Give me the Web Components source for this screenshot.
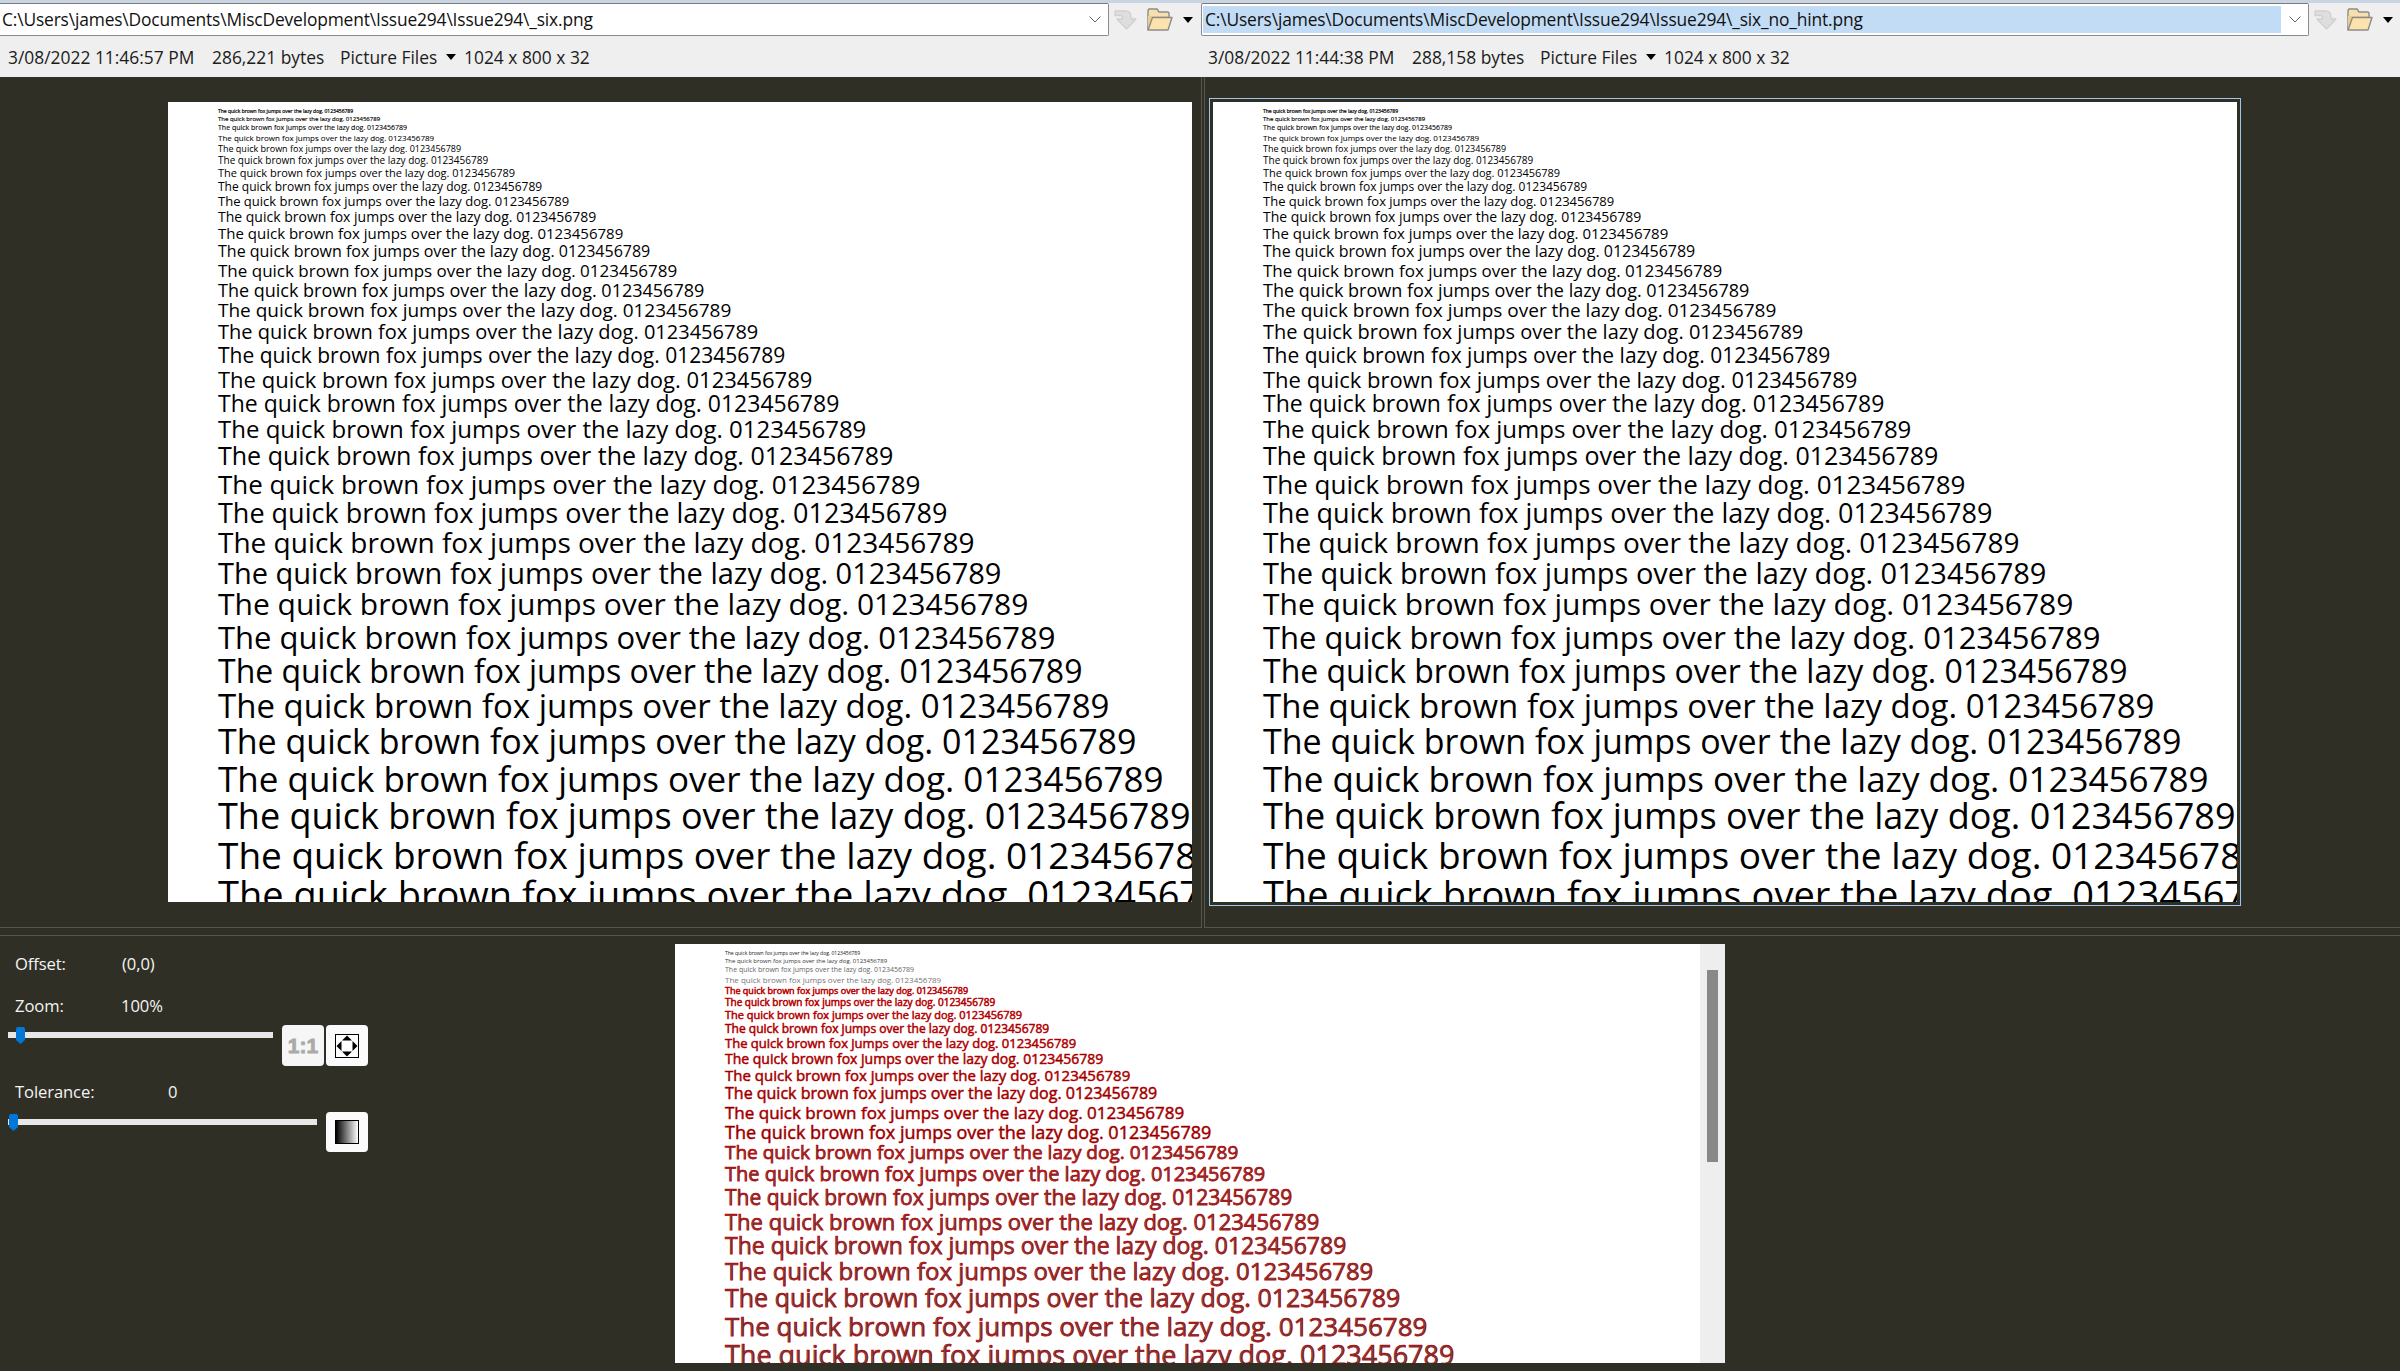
<!DOCTYPE html>
<html>
<head>
<meta charset="utf-8">
<title>Image compare</title>
<style>
    html, body {
        margin: 0;
        height: 100%;
        background-color: #302f25;
        overflow: hidden;
    }
</style>
</head>
<body>
<compare-app></compare-app>

<script>
const UI_FONT = '"Open Sans", "Noto Sans", sans-serif';
const SAMPLE = "The quick brown fox jumps over the lazy dog. 0123456789";

class SampleText extends HTMLElement {
    constructor() {
        super();
        this.attachShadow({ mode: "open" });
    }

    connectedCallback() {
        const diff = this.hasAttribute("diff");
        let lines = "";
        for (let i = 0; i < 34; i++) {
            const size = 5 + i;
            lines += `<div style="font-size:${size}px;line-height:${size + 2.22}px;${diff ? this.diffStyle(i) : this.plainStyle(i)}">${SAMPLE}</div>`;
        }
        this.shadowRoot.innerHTML = `
            <style>
                :host {
                    display: block;
                    width: 100%;
                    height: 100%;
                    box-sizing: border-box;
                    padding: 6px 0 0 50px;
                    overflow: hidden;
                    background-color: #fff;
                    color: #000;
                    font-family: "Open Sans", sans-serif;
                    white-space: nowrap;
                }
            </style>
            ${lines}
        `;
    }

    // the smallest sizes came out heavier in the screenshots
    plainStyle(i) {
        const stroke = [0.2, 0.15, 0.1, 0.06, 0.03][i];
        return stroke ? `-webkit-text-stroke:${stroke}px #000;` : "";
    }

    // first four lines are the same in both files, the rest differ
    diffStyle(i) {
        if (i < 4) {
            return `color:${["#111", "#333", "#666", "#777"][i]};`;
        }
        if (i < 14) {
            return "color:#700000;-webkit-text-stroke:.5px #c80000;";
        }
        return "color:#4a4a4a;-webkit-text-stroke:.75px #c40000;";
    }
}

class PathCombo extends HTMLElement {
    constructor() {
        super();
        this.attachShadow({ mode: "open" });
    }

    connectedCallback() {
        this.shadowRoot.innerHTML = `
            <style>
                :host {
                    display: flex;
                    align-items: center;
                    box-sizing: border-box;
                    height: 33px;
                    flex: 1;
                    background-color: #fff;
                    border: 1px solid #8a8a8a;
                    border-top-color: #7c7c7c;
                    border-left: 0;
                    border-radius: 0 2px 2px 0;
                    font: 17.4px ${UI_FONT};
                    letter-spacing: -.16px;
                    color: #111;
                }

                :host([focused]) {
                    border-left: 1px solid #8a8a8a;
                    border-radius: 2px;
                }

                .value {
                    flex: 1;
                    height: 27px;
                    line-height: 27px;
                    padding-left: 2px;
                    white-space: nowrap;
                    margin-right: 8px;
                }

                :host([focused]) .value {
                    background-color: #c2dcf5;
                    margin-left: 1px;
                }

                svg {
                    flex: none;
                    margin-right: 7px;
                }
            </style>
            <div class="value"><slot></slot></div>
            <svg width="12" height="7" viewBox="0 0 12 7"><path d="M.5.5 6 6l5.5-5.5" fill="none" stroke="#666" stroke-width="1"/></svg>
        `;
    }
}

class FilePane extends HTMLElement {
    constructor() {
        super();
        this.attachShadow({ mode: "open" });
    }

    connectedCallback() {
        const focused = this.hasAttribute("focused");
        this.shadowRoot.innerHTML = `
            <style>
                :host {
                    display: flex;
                    flex-direction: column;
                    height: 100%;
                    font: 17.4px ${UI_FONT};
                }

                .path-row {
                    display: flex;
                    align-items: center;
                    background-color: #efefef;
                    height: 33px;
                }

                .icons {
                    flex: none;
                    display: flex;
                    align-items: center;
                    width: ${focused ? 91 : 92}px;
                    padding-left: 5px;
                    box-sizing: border-box;
                }

                .info-row {
                    display: flex;
                    align-items: center;
                    height: 41px;
                    padding-left: ${focused ? 7 : 8}px;
                    background-color: #efefef;
                    color: #1c1c1c;
                    white-space: nowrap;
                }

                .stamp { width: 204px; }
                .bytes { width: 128px; }
                .type { width: 124px; }

                .caret {
                    display: inline-block;
                    width: 0;
                    height: 0;
                    margin-left: 9px;
                    margin-bottom: 3px;
                    vertical-align: middle;
                    border-top: 6px solid #000;
                    border-left: 5px solid transparent;
                    border-right: 5px solid transparent;
                }

                .viewer {
                    flex: 1;
                    box-sizing: border-box;
                    border-bottom: 1px solid #56554e;
                    ${focused
                        ? "margin-left: 3px; border-left: 1px solid #56554e; padding: 21px 0 0 4px;"
                        : "margin-right: -1px; border-right: 1px solid #56554e; padding: 25px 0 0 168px;"}
                }

                .frame {
                    box-sizing: content-box;
                    width: 1024px;
                    height: 800px;
                    ${focused ? "padding: 3px; border: 1px solid #9cc6ee;" : ""}
                }
            </style>
            <div class="path-row">
                <path-combo ${focused ? "focused" : ""}>${this.getAttribute("path")}</path-combo>
                <div class="icons">
                    <svg width="24" height="22" viewBox="0 0 24 22"><path d="M1 2h10c4 0 6 2.4 6 6v2h5l-9.500 10L3 10h5.500V8.500C8.500 7 8 6.500 6.500 6.500H1z" fill="#dedede" stroke="#d0d0d0" stroke-width="1.300" stroke-linejoin="round"/></svg>
                    <svg style="margin-left:9px" width="26" height="23" viewBox="0 0 26 23"><path d="M1 22V2.500L2 1h8l2 3h9l1 1v4" fill="#f6e0b0" stroke="#8c8c8c" stroke-width="1.400"/><path d="M1 22V8h20v2H7z" fill="#e9cd92"/><path d="M5.500 9.500H25L21 22H1z" fill="#fce3ae" stroke="#8c8c8c" stroke-width="1.400" stroke-linejoin="round"/></svg>
                    <span class="caret" style="margin-left:10px;margin-bottom:0"></span>
                </div>
            </div>
            <div class="info-row">
                <span class="stamp">${this.getAttribute("stamp")}</span>
                <span class="bytes">${this.getAttribute("bytes")}</span>
                <span class="type">Picture Files<span class="caret"></span></span>
                <span>1024 x 800 x 32</span>
            </div>
            <div class="viewer"><div class="frame"><slot></slot></div></div>
        `;
    }
}

class ValueLabel extends HTMLElement {
    constructor() {
        super();
        this.attachShadow({ mode: "open" });
    }

    connectedCallback() {
        this.shadowRoot.innerHTML = `
            <style>
                :host {
                    display: flex;
                    align-items: center;
                    height: 24px;
                    padding-left: 15px;
                    color: #f4f4f4;
                    font: 16.6px ${UI_FONT};
                    letter-spacing: -.1px;
                }

                .name { width: ${this.getAttribute("name-width")}px; }
            </style>
            <span class="name">${this.getAttribute("name")}</span>
            <span>${this.getAttribute("value")}</span>
        `;
    }
}

class ThumbSlider extends HTMLElement {
    constructor() {
        super();
        this.attachShadow({ mode: "open" });
    }

    connectedCallback() {
        this.shadowRoot.innerHTML = `
            <style>
                :host {
                    display: block;
                    position: relative;
                    height: 17px;
                    margin-top: 2px;
                    width: ${this.getAttribute("length")}px;
                    flex: none;
                }

                .track {
                    height: 6px;
                    margin-top: 5px;
                    background-color: #e7e7e7;
                }

                /* thumb lies over the track */
                .thumb {
                    position: absolute;
                    top: 0;
                    left: ${this.getAttribute("at")}px;
                    width: 9px;
                    height: 17px;
                    background-color: #0078d7;
                    border-radius: 2px 2px 0 0;
                    clip-path: polygon(0 0, 100% 0, 100% 76%, 50% 100%, 0 76%);
                }
            </style>
            <div class="track"></div>
            <div class="thumb"></div>
        `;
    }
}

class SquareButton extends HTMLElement {
    constructor() {
        super();
        this.attachShadow({ mode: "open" });
    }

    connectedCallback() {
        this.shadowRoot.innerHTML = `
            <style>
                :host {
                    display: flex;
                    flex: none;
                    align-items: center;
                    justify-content: center;
                    width: 42px;
                    height: 41px;
                    background-color: #fbfbfb;
                    border-radius: 4px;
                }

                :host([disabled]) {
                    background-color: #f6f6f6;
                    color: #aaa;
                    font: bold 21px "Liberation Sans", sans-serif;
                    -webkit-text-stroke: .8px #aaa;
                }
            </style>
            <slot></slot>
        `;
    }
}

class DiffControls extends HTMLElement {
    constructor() {
        super();
        this.attachShadow({ mode: "open" });
    }

    connectedCallback() {
        this.shadowRoot.innerHTML = `
            <style>
                :host {
                    display: block;
                    flex: none;
                    width: 675px;
                    padding-top: 15px;
                }

                .zoom-label { margin-top: 18px; }
                .tolerance-label { margin-top: 13px; }

                .control-row {
                    display: flex;
                    align-items: flex-start;
                    padding-left: 8px;
                    margin-top: 8px;
                    gap: 2px;
                }

                .control-row thumb-slider {
                    margin-right: 7px;
                }

                .grad {
                    width: 22px;
                    height: 22px;
                    border: 1px solid #000;
                    background: linear-gradient(to right, #000, #fff);
                }
            </style>
            <value-label name="Offset:" value="(0,0)" name-width="107"></value-label>
            <value-label class="zoom-label" name="Zoom:" value="100%" name-width="106"></value-label>
            <div class="control-row">
                <thumb-slider length="265" at="8"></thumb-slider>
                <square-button disabled>1:1</square-button>
                <square-button>
                    <svg width="24" height="24" viewBox="0 0 24 24"><rect x=".5" y=".5" width="23" height="23" fill="#fff" stroke="#000"/><path d="M12 1.500l5 5H7zM12 22.500l-5-5h10zM1.500 12l5-5v10zM22.500 12l-5 5V7z" fill="#000"/></svg>
                </square-button>
            </div>
            <value-label class="tolerance-label" name="Tolerance:" value="0" name-width="153"></value-label>
            <div class="control-row" style="margin-top:9px">
                <thumb-slider length="309" at="1"></thumb-slider>
                <square-button style="height:40px"><div class="grad"></div></square-button>
            </div>
        `;
    }
}

class DiffView extends HTMLElement {
    constructor() {
        super();
        this.attachShadow({ mode: "open" });
    }

    connectedCallback() {
        this.shadowRoot.innerHTML = `
            <style>
                :host {
                    display: flex;
                    flex: none;
                    width: 1050px;
                    height: 419px;
                    margin-top: 8px;
                    background-color: #fff;
                }

                .page {
                    flex: 1;
                    overflow: hidden;
                }

                .scrollbar {
                    flex: none;
                    width: 25px;
                    box-sizing: border-box;
                    padding: 26px 7px 0;
                    background-color: #eee;
                }

                .scrollbar div {
                    height: 192px;
                    background-color: #888;
                }
            </style>
            <div class="page"><slot></slot></div>
            <div class="scrollbar"><div></div></div>
        `;
    }
}

class CompareApp extends HTMLElement {
    constructor() {
        super();
        this.attachShadow({ mode: "open" });
    }

    connectedCallback() {
        this.shadowRoot.innerHTML = `
            <style>
                :host {
                    display: flex;
                    flex-direction: column;
                    width: 2400px;
                    height: 1371px;
                    background-color: #302f25;
                }

                .strip {
                    height: 3px;
                    background-color: #c9d4e3;
                }

                .panes {
                    display: grid;
                    grid-template-columns: 1201px 1199px;
                    height: 925px;
                    flex: none;
                }

                .bottom {
                    flex: 1;
                    display: flex;
                    margin-top: 7px;
                    border-top: 1px solid #56554e;
                }
            </style>
            <div class="strip"></div>
            <div class="panes">
                <file-pane path="C:\\Users\\james\\Documents\\MiscDevelopment\\Issue294\\Issue294\\_six.png" stamp="3/08/2022 11:46:57 PM" bytes="286,221 bytes">
                    <sample-text></sample-text>
                </file-pane>
                <file-pane focused path="C:\\Users\\james\\Documents\\MiscDevelopment\\Issue294\\Issue294\\_six_no_hint.png" stamp="3/08/2022 11:44:38 PM" bytes="288,158 bytes">
                    <sample-text></sample-text>
                </file-pane>
            </div>
            <div class="bottom">
                <diff-controls></diff-controls>
                <diff-view><sample-text diff></sample-text></diff-view>
            </div>
        `;
    }
}

customElements.define("sample-text", SampleText);
customElements.define("path-combo", PathCombo);
customElements.define("file-pane", FilePane);
customElements.define("value-label", ValueLabel);
customElements.define("thumb-slider", ThumbSlider);
customElements.define("square-button", SquareButton);
customElements.define("diff-controls", DiffControls);
customElements.define("diff-view", DiffView);
customElements.define("compare-app", CompareApp);
</script>
</body>
</html>
